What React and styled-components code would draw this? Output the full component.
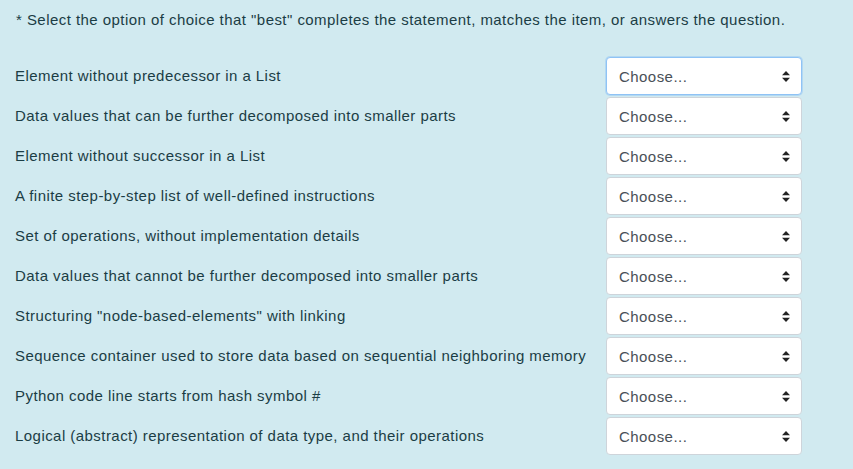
import styled, { createGlobalStyle } from "styled-components";

const GlobalStyle = createGlobalStyle`
  html, body {
    margin: 0;
    padding: 0;
    background: #d1eaf0;
  }
  body {
    font-family: "Liberation Sans", Arial, sans-serif;
  }
`;

const items = [
  "Element without predecessor in a List",
  "Data values that can be further decomposed into smaller parts",
  "Element without successor in a List",
  "A finite step-by-step list of well-defined instructions",
  "Set of operations, without implementation details",
  "Data values that cannot be further decomposed into smaller parts",
  'Structuring "node-based-elements" with linking',
  "Sequence container used to store data based on sequential neighboring memory",
  "Python code line starts from hash symbol #",
  "Logical (abstract) representation of data type, and their operations",
];

function App() {
  return (
    <>
      <GlobalStyle />
      <Panel>
        <Prompt>
          * Select the option of choice that "best" completes the statement,
          matches the item, or answers the question.
        </Prompt>
        <MatchTable>
          {items.map((text, i) => (
            <Row key={i}>
              <Label>{text}</Label>
              <SelectWrap>
                <Select focused={i === 0} defaultValue="">
                  <option value="">Choose...</option>
                </Select>
                <Arrows width="8" height="11" viewBox="0 0 8 11">
                  <path d="M4 0 L8 4.3 H0 Z" fill="#222" />
                  <path d="M4 11 L8 6.7 H0 Z" fill="#222" />
                </Arrows>
              </SelectWrap>
            </Row>
          ))}
        </MatchTable>
      </Panel>
    </>
  );
}
export default App;

const Panel = styled.div`
  width: 853px;
  height: 469px;
  box-sizing: border-box;
  padding: 10px 0 0 15px;
  background: #d1eaf0;
  color: #1b3d45;
  font-size: 15px;
  letter-spacing: 0.45px;
`;

const Prompt = styled.div`
  line-height: 20px;
  margin-left: 1px;
  margin-bottom: 26px;
`;

const MatchTable = styled.div`
  display: flex;
  flex-direction: column;
`;

const Row = styled.div`
  display: grid;
  grid-template-columns: 591px 196px;
  align-items: center;
  height: 40px;
`;

const Label = styled.div`
  line-height: 20px;
  margin-top: -1px;
`;

const SelectWrap = styled.div`
  position: relative;
  height: 38px;
`;

const Select = styled.select`
  appearance: none;
  -webkit-appearance: none;
  width: 100%;
  height: 38px;
  box-sizing: border-box;
  padding: 0 24px 0 12px;
  border: 1px solid ${(p) => (p.focused ? "#8fc3f5" : "#ced4da")};
  box-shadow: ${(p) => (p.focused ? "0 0 0 1px rgba(143,195,245,0.45)" : "none")};
  border-radius: 4px;
  background: #fff;
  color: #495057;
  font-family: "Liberation Sans", Arial, sans-serif;
  font-size: 15px;
  letter-spacing: 0.45px;
  outline: none;
`;

const Arrows = styled.svg`
  position: absolute;
  right: 12px;
  top: 14px;
  pointer-events: none;
`;
